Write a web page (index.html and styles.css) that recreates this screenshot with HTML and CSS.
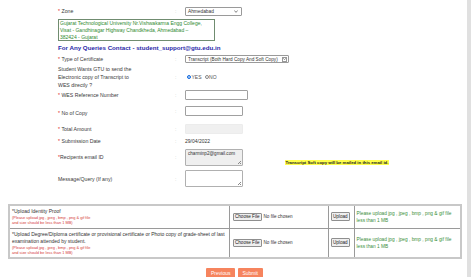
FILE: index.html
```html
<!DOCTYPE html>
<html>
<head>
<meta charset="utf-8">
<link rel="stylesheet" href="styles.css">
</head>
<body>
<div class="page">
  <div class="form">
    <div class="row r-zone">
      <div class="lbl"><span class="req">*</span> Zone</div>
      <div class="colon">:</div>
      <div class="fld"><div class="sel sel-zone"><span>Ahmedabad</span><svg class="arr" viewBox="0 0 6 4" width="4" height="3"><path d="M0.5 0.8 L3 3.2 L5.5 0.8" fill="none" stroke="#333" stroke-width="1"/></svg></div></div>
    </div>
    <div class="addr">Gujarat Technological University Nr.Vishwakarma Engg College,<br>Visat - Gandhinagar Highway Chandkheda, Ahmedabad –<br>382424 - Gujarat</div>
    <div class="contact">For Any Queries Contact - student_support@gtu.edu.in</div>
    <div class="row r-type">
      <div class="lbl"><span class="req">*</span> Type of Certificate</div>
      <div class="colon">:</div>
      <div class="fld"><div class="sel sel-type"><span>Transcript (Both Hard Copy And Soft Copy)</span><span class="arrbox"><svg viewBox="0 0 6 4" width="3" height="2"><path d="M0.5 0.8 L3 3.2 L5.5 0.8" fill="none" stroke="#333" stroke-width="1.2"/></svg></span></div></div>
    </div>
    <div class="row r-gtu">
      <div class="lbl">Student Wants GTU to send the<br>Electronic copy of Transcript to<br>WES directly ?</div>
      <div class="colon">:</div>
      <div class="fld"><span class="radio on"></span><span class="rtxt">YES</span><span class="radio"></span><span class="rtxt">NO</span></div>
    </div>
    <div class="row r-wes">
      <div class="lbl"><span class="req">*</span> WES Reference Number</div>
      <div class="colon">:</div>
      <div class="fld"><div class="inp inp-wes"></div></div>
    </div>
    <div class="row r-copy">
      <div class="lbl"><span class="req">*</span> No of Copy</div>
      <div class="colon">:</div>
      <div class="fld"><div class="inp inp-copy"></div></div>
    </div>
    <div class="row r-total">
      <div class="lbl"><span class="req">*</span> Total Amount</div>
      <div class="colon">:</div>
      <div class="fld"><div class="inp inp-total"></div></div>
    </div>
    <div class="row r-date">
      <div class="lbl"><span class="req">*</span> Submission Date</div>
      <div class="colon">:</div>
      <div class="fld"><span class="val">29/04/2022</span></div>
    </div>
    <div class="row r-mail">
      <div class="lbl"><span class="req">*</span>Recipents email ID</div>
      <div class="colon">:</div>
      <div class="fld"><div class="ta ta-mail">charminp2@gmail.com<span class="grip"></span></div><span class="note">Transcript Soft copy will be mailed in this email id.</span></div>
    </div>
    <div class="row r-msg">
      <div class="lbl">Message/Query (If any)</div>
      <div class="colon">:</div>
      <div class="fld"><div class="ta ta-msg"><span class="grip"></span></div></div>
    </div>
  </div>
  <table class="uploads">
    <tr class="u1">
      <td class="c1"><div class="utitle">*Upload Identity Proof</div><div class="hint">(Please upload jpg , jpeg , bmp , png &amp; gif file<br>and size should be less than 1 MB)</div></td>
      <td class="c2"><span class="fbtn">Choose File</span><span class="fnone">No file chosen</span></td>
      <td class="c3"><span class="ubtn">Upload</span></td>
      <td class="c4">Please upload jpg , jpeg , bmp , png &amp; gif file<br>less than 1 MB</td>
    </tr>
    <tr class="u2">
      <td class="c1"><div class="utitle">*Upload Degree/Diploma certificate or provisional certificate or Photo copy of grade-sheet of last<br>examination attended by student.</div><div class="hint">(Please upload jpg , jpeg , bmp , png &amp; gif file<br>and size should be less than 1 MB)</div></td>
      <td class="c2"><span class="fbtn">Choose File</span><span class="fnone">No file chosen</span></td>
      <td class="c3"><span class="ubtn">Upload</span></td>
      <td class="c4">Please upload jpg , jpeg , bmp , png &amp; gif file<br>less than 1 MB</td>
    </tr>
  </table>
  <div class="actions"><span class="btn">Previous</span><span class="btn">Submit</span></div>
</div>
</body>
</html>
```
FILE: styles.css
```css
* { box-sizing: border-box; margin: 0; padding: 0; }
body { margin: 0; background: #fff; font-family: "Liberation Sans", Arial, sans-serif; color: #333; }
.page { width: 471px; height: 277px; border-right: 4px solid #e0e0e0; overflow: hidden; }
.form { padding: 5px 0 0 58px; }
.row { display: flex; align-items: center; }
.lbl { width: 117px; font-size: 5.2px; line-height: 8px; color: #3a3a3a; white-space: nowrap; }
.req { color: #d22; }
.colon { width: 10px; font-size: 5px; color: #c4c4c4; }
.fld { display: flex; align-items: center; font-size: 5px; color: #333; }

.r-zone { height: 12px; }
.sel { display: flex; align-items: center; justify-content: space-between; border: 1px solid #9a9a9a; border-radius: 1px; background: #fff; font-size: 4.8px; color: #333; padding: 0 2px; }
.sel-zone { width: 57px; height: 9px; }
.sel-zone .arr { margin-right: 1px; }
.sel-type { width: 104px; height: 8px; padding-right: 1px; font-size: 4.7px; }
.arrbox { display: flex; align-items: center; justify-content: center; width: 5px; height: 5px; border: 1px solid #999; }

.addr { margin-top: 2px; width: 157px; height: 22px; border: 1px solid #708c70; color: #2f8a2f; font-size: 5px; line-height: 7px; padding: 0 1px; white-space: nowrap; }
.contact { margin-top: 2px; height: 10px; line-height: 10px; font-size: 6.2px; font-weight: bold; color: #2828a8; }

.r-type { height: 12px; }
.r-gtu { height: 24px; }
.radio { width: 4px; height: 4px; border-radius: 50%; border: 0.6px solid #888; background: #fff; margin-left: 2px; }
.radio.on { border: 1.2px solid #1a6fe0; background: #1a6fe0; box-shadow: inset 0 0 0 0.6px #fff; }
.rtxt { font-size: 5px; margin-left: 0.5px; margin-right: 1px; color: #555; }

.inp { height: 10px; border: 1px solid #a0a0a0; border-radius: 1px; background: #fff; }
.r-wes { height: 12px; }
.inp-wes { width: 63px; height: 10px; }
.r-copy { height: 20px; }
.r-copy .lbl { margin-top: 4px; }
.inp-copy { width: 58px; height: 10px; margin-bottom: 1px; }
.r-total { height: 15px; }
.inp-total { width: 58px; height: 10px; background: #f0f0f0; border-color: #ececec; }
.r-date { height: 10px; }
.val { font-size: 5px; }
.r-mail { height: 22px; }
.ta { position: relative; width: 58px; height: 17px; border: 1px solid #b0b0b0; border-radius: 1px; font-size: 4.6px; padding: 1px 2px; line-height: 6px; }
.ta-mail { background: #efefef; }
.grip { position: absolute; right: 1px; bottom: 1px; width: 3px; height: 3px; background: linear-gradient(135deg, transparent 45%, #888 45%, #888 55%, transparent 55%, transparent 75%, #888 75%); }
.note { margin-left: 42px; margin-top: 11px; font-size: 4.3px; font-weight: bold; background: #ffff4a; color: #222; line-height: 5px; padding: 0 0.5px; }
.r-msg { height: 21px; }
.ta-msg { background: #fff; }

.uploads { margin: 15px 0 0 8px; width: 454px; border-collapse: collapse; border: 2px solid #c8c8c8; font-size: 4.8px; color: #333; }
.uploads td { border: 1px solid #9a9a9a; vertical-align: middle; }
.u1 td { height: 23px; }
.u2 td { height: 30px; }
.c1 { width: 220px; padding: 0 2px; white-space: nowrap; }
.c2 { width: 99px; padding-left: 3px; }
.c3 { width: 26px; padding-left: 2px; }
.c4 { padding: 0 2px; color: #3b8f3b; font-size: 4.8px; line-height: 7px; white-space: nowrap; }
.utitle { font-size: 5px; line-height: 7px; color: #333; }
.hint { color: #d43a3a; font-size: 3.9px; line-height: 5px; }
.fbtn { display: inline-block; border: 1px solid #8f8f8f; background: #efefef; border-radius: 1px; font-size: 4.6px; line-height: 6px; padding: 0 1.5px; color: #222; }
.fnone { font-size: 4.6px; margin-left: 1.5px; color: #333; }
.ubtn { display: inline-block; border: 1px solid #8f8f8f; background: #efefef; border-radius: 1px; font-size: 4.6px; line-height: 7px; padding: 0 1.5px; color: #222; }

.actions { display: flex; justify-content: center; gap: 3px; margin-top: 9px; padding-left: 2px; }
.btn { display: inline-block; background: #f6845e; color: #fff; font-size: 5px; line-height: 11px; height: 11px; padding: 0 4.5px; border-radius: 1px; }
```
